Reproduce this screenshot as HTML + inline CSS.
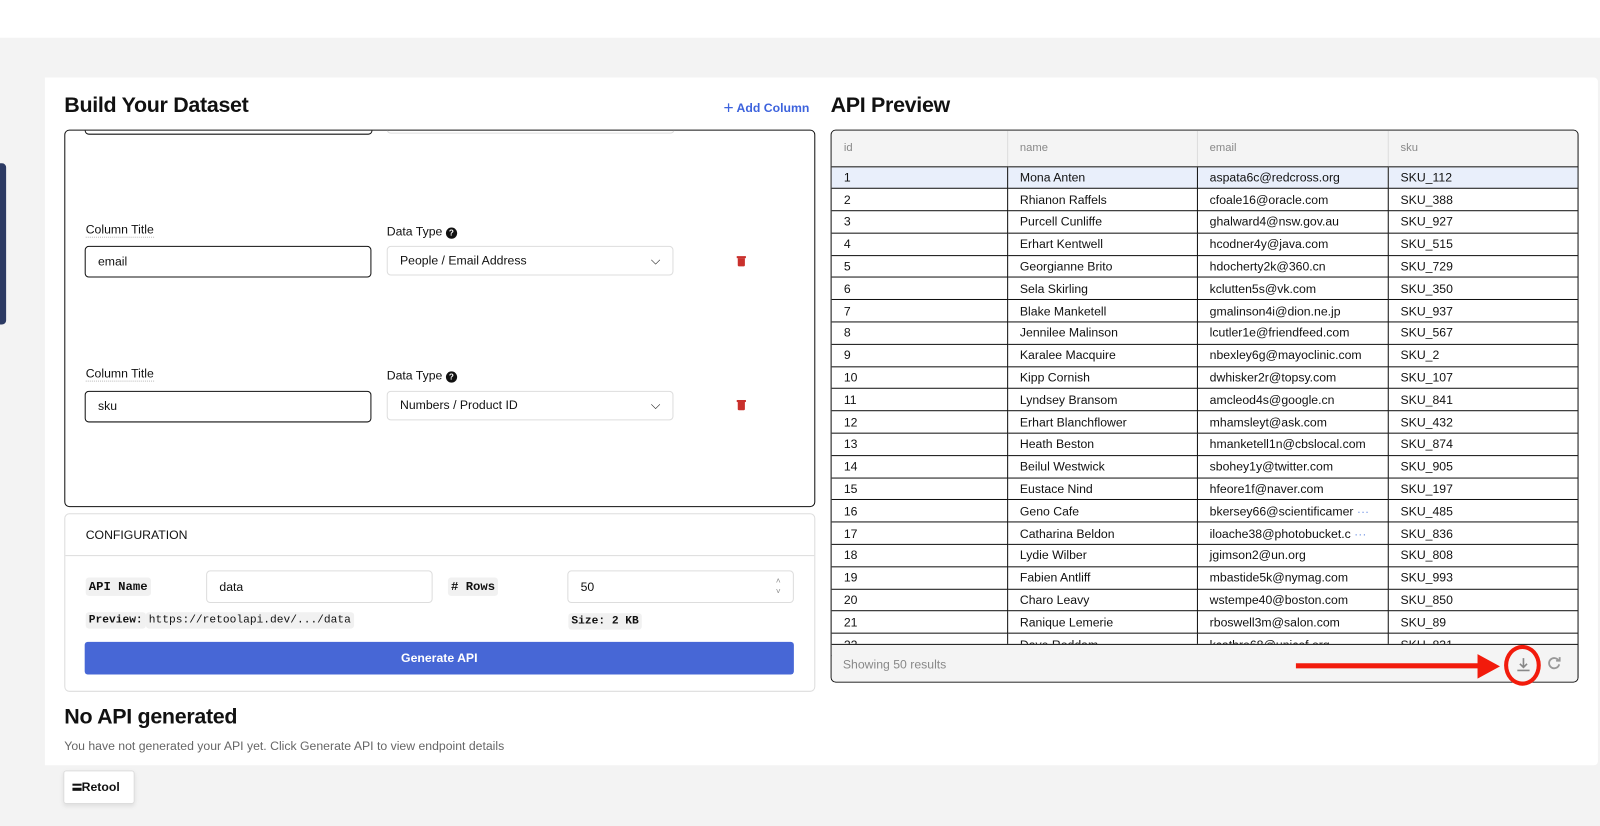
<!DOCTYPE html><html><head><style>
*{box-sizing:border-box;margin:0;padding:0}
body{width:1600px;height:825px;background:#f3f3f3;font-family:"Liberation Sans",sans-serif;position:relative;overflow:hidden;color:#111}
#w{position:absolute;left:0;top:0;width:1568px;height:809px;transform:scale(1.0204);transform-origin:0 0}
.abs{position:absolute}
.top{left:0;top:0;width:1568px;height:37px;background:#fff}
.panel{left:44px;top:76px;width:1522px;height:674px;background:#fff;border-radius:0 4px 4px 0}
h1{font-size:21px;font-weight:bold;letter-spacing:-0.3px}
.lbl{font-size:12px;color:#111}
.inp{border:1px solid #111;border-radius:4px;height:31px;font-size:12px;padding:0 12px;line-height:29px;background:#fff}
.sel{border:1px solid #ddd;border-radius:4px;height:29px;font-size:12px;padding:0 12px;line-height:27px}
.trash{width:7px;height:8px;background:#c9302c;border-radius:0 0 1px 1px}
.trash:before{content:"";position:absolute;left:-1px;top:-2px;width:9px;height:1.5px;background:#c9302c}
table{border-collapse:collapse;font-size:12px;width:733px;table-layout:fixed}
td{border:1px solid #111;height:21.8px;padding:0 12px;white-space:nowrap;overflow:hidden}
th{height:35px;text-align:left;font-weight:normal;color:#888;font-size:11px;padding:0 12px;border-right:1px solid #ddd;border-bottom:1px solid #111;background:#f4f4f4}
.mono{font-family:"Liberation Mono",monospace;font-size:11px;background:#f1f1f1;border-radius:3px;padding:2px 3px}
</style></head><body><div id="w">
<div class="abs top"></div>
<div class="abs" style="left:0;top:160px;width:6px;height:158px;background:#2c3a63;border-radius:0 4px 4px 0"></div>
<div class="abs panel"></div>
<h1 class="abs" style="left:63px;top:92px">Build Your Dataset</h1>
<div class="abs" style="left:709px;top:95px;color:#3d63dd;font-size:12px;font-weight:bold"><span style="font-size:17px;font-weight:normal;position:relative;top:1px">+</span> Add Column</div>
<div class="abs" style="left:63px;top:127px;width:736px;height:370px;border:1px solid #111;border-radius:5px;overflow:hidden;background:#fff">
 <div class="abs" style="left:19px;top:-10px;width:282px;height:14px;border:1px solid #111;border-radius:4px"></div>
 <div class="abs" style="left:315px;top:-10px;width:282px;height:13px;border:1px solid #ddd;border-radius:4px"></div>
</div>
<div class="abs lbl" style="left:84px;top:218px;border-bottom:1px dotted #bbb">Column Title</div>
<div class="abs lbl" style="left:379px;top:220px">Data Type <span style="display:inline-block;width:11px;height:11px;border-radius:50%;background:#111;color:#fff;font-size:8px;text-align:center;line-height:11px;font-weight:bold">?</span></div>
<div class="abs inp" style="left:83px;top:241px;width:281px">email</div>
<div class="abs sel" style="left:379px;top:241px;width:281px">People / Email Address<span style="float:right">⌵</span></div>
<div class="abs trash" style="left:723px;top:253px"></div>
<div class="abs lbl" style="left:84px;top:359px;border-bottom:1px dotted #bbb">Column Title</div>
<div class="abs lbl" style="left:379px;top:361px">Data Type <span style="display:inline-block;width:11px;height:11px;border-radius:50%;background:#111;color:#fff;font-size:8px;text-align:center;line-height:11px;font-weight:bold">?</span></div>
<div class="abs inp" style="left:83px;top:383px;width:281px">sku</div>
<div class="abs sel" style="left:379px;top:383px;width:281px">Numbers / Product ID<span style="float:right">⌵</span></div>
<div class="abs trash" style="left:723px;top:394px"></div>
<div class="abs" style="left:63px;top:503px;width:736px;height:175px;border:1px solid #ddd;border-radius:5px">
 <div style="height:41px;border-bottom:1px solid #ddd;font-size:12px;padding:13px 0 0 20px">CONFIGURATION</div>
</div>
<div class="abs" style="left:84px;top:566px;font-family:'Liberation Mono',monospace;font-weight:bold;font-size:12px;background:#f1f1f1;padding:2px 3px;border-radius:3px">API Name</div>
<div class="abs sel" style="left:202px;top:559px;width:222px;height:32px;line-height:30px">data</div>
<div class="abs" style="left:439px;top:566px;font-family:'Liberation Mono',monospace;font-weight:bold;font-size:12px;background:#f1f1f1;padding:2px 3px;border-radius:3px"># Rows</div>
<div class="abs sel" style="left:556px;top:559px;width:222px;height:32px;line-height:30px">50<span style="float:right;font-size:8px;line-height:10px;color:#888;margin-top:5px">˄<br>˅</span></div>
<div class="abs" style="left:84px;top:601px;font-size:11px"><span class="mono" style="font-weight:bold">Preview:</span><span class="mono">https://retoolapi.dev/.../data</span></div>
<div class="abs mono" style="left:557px;top:601px;font-weight:bold">Size: 2 KB</div>
<div class="abs" style="left:83px;top:629px;width:695px;height:32px;background:#4767d6;border-radius:3px;color:#fff;font-size:12px;font-weight:bold;text-align:center;line-height:32px">Generate API</div>
<h1 class="abs" style="left:63px;top:691px">No API generated</h1>
<div class="abs" style="left:63px;top:724px;font-size:12px;color:#666">You have not generated your API yet. Click Generate API to view endpoint details</div>
<div class="abs" style="left:62px;top:755px;width:70px;height:33px;background:#fff;border:1px solid #ddd;border-radius:3px;box-shadow:0 2px 4px rgba(0,0,0,.08);font-size:12px;font-weight:bold;line-height:31px;padding-left:8px"><span style="display:inline-block;width:9px;height:7px;border-top:2px solid #111;border-bottom:3px solid #111;vertical-align:middle"></span>Retool</div>
<h1 class="abs" style="left:814px;top:92px">API Preview</h1>
<div class="abs" style="left:814px;top:127px;width:733px;height:542px;border:1px solid #111;border-radius:5px;overflow:hidden;background:#fff">
<table><colgroup><col style="width:172px"><col style="width:186px"><col style="width:187px"><col></colgroup>
<tr><th>id</th><th>name</th><th>email</th><th style="border-right:none">sku</th></tr>
<tr style="background:#e9effb"><td style="border-left:none">1</td><td>Mona Anten</td><td>aspata6c@redcross.org</td><td>SKU_112</td></tr>
<tr><td style="border-left:none">2</td><td>Rhianon Raffels</td><td>cfoale16@oracle.com</td><td>SKU_388</td></tr>
<tr><td style="border-left:none">3</td><td>Purcell Cunliffe</td><td>ghalward4@nsw.gov.au</td><td>SKU_927</td></tr>
<tr><td style="border-left:none">4</td><td>Erhart Kentwell</td><td>hcodner4y@java.com</td><td>SKU_515</td></tr>
<tr><td style="border-left:none">5</td><td>Georgianne Brito</td><td>hdocherty2k@360.cn</td><td>SKU_729</td></tr>
<tr><td style="border-left:none">6</td><td>Sela Skirling</td><td>kclutten5s@vk.com</td><td>SKU_350</td></tr>
<tr><td style="border-left:none">7</td><td>Blake Manketell</td><td>gmalinson4i@dion.ne.jp</td><td>SKU_937</td></tr>
<tr><td style="border-left:none">8</td><td>Jennilee Malinson</td><td>lcutler1e@friendfeed.com</td><td>SKU_567</td></tr>
<tr><td style="border-left:none">9</td><td>Karalee Macquire</td><td>nbexley6g@mayoclinic.com</td><td>SKU_2</td></tr>
<tr><td style="border-left:none">10</td><td>Kipp Cornish</td><td>dwhisker2r@topsy.com</td><td>SKU_107</td></tr>
<tr><td style="border-left:none">11</td><td>Lyndsey Bransom</td><td>amcleod4s@google.cn</td><td>SKU_841</td></tr>
<tr><td style="border-left:none">12</td><td>Erhart Blanchflower</td><td>mhamsleyt@ask.com</td><td>SKU_432</td></tr>
<tr><td style="border-left:none">13</td><td>Heath Beston</td><td>hmanketell1n@cbslocal.com</td><td>SKU_874</td></tr>
<tr><td style="border-left:none">14</td><td>Beilul Westwick</td><td>sbohey1y@twitter.com</td><td>SKU_905</td></tr>
<tr><td style="border-left:none">15</td><td>Eustace Nind</td><td>hfeore1f@naver.com</td><td>SKU_197</td></tr>
<tr><td style="border-left:none">16</td><td>Geno Cafe</td><td>bkersey66@scientificamer <span style="color:#7b9be6">···</span></td><td>SKU_485</td></tr>
<tr><td style="border-left:none">17</td><td>Catharina Beldon</td><td>iloache38@photobucket.c <span style="color:#7b9be6">···</span></td><td>SKU_836</td></tr>
<tr><td style="border-left:none">18</td><td>Lydie Wilber</td><td>jgimson2@un.org</td><td>SKU_808</td></tr>
<tr><td style="border-left:none">19</td><td>Fabien Antliff</td><td>mbastide5k@nymag.com</td><td>SKU_993</td></tr>
<tr><td style="border-left:none">20</td><td>Charo Leavy</td><td>wstempe40@boston.com</td><td>SKU_850</td></tr>
<tr><td style="border-left:none">21</td><td>Ranique Lemerie</td><td>rboswell3m@salon.com</td><td>SKU_89</td></tr>
<tr><td style="border-left:none">22</td><td>Dave Roddam</td><td>kcathro68@unicef.org</td><td>SKU_831</td></tr>
</table>
<div class="abs" style="left:0;top:503px;width:100%;height:38px;background:#f4f4f4;border-top:1px solid #111;font-size:12px;color:#888;padding:12px 0 0 11px">Showing 50 results</div>
</div>
<div class="abs" style="left:1270px;top:650px;width:180px;height:5px;background:#f21b0c"></div>
<div class="abs" style="left:1448px;top:641px;width:0;height:0;border-left:22px solid #f21b0c;border-top:12px solid transparent;border-bottom:12px solid transparent"></div>
<div class="abs" style="left:1474px;top:632px;width:36px;height:40px;border:4px solid #f21b0c;border-radius:50%"></div>
<svg class="abs" style="left:1486px;top:643px" width="14" height="16" viewBox="0 0 14 16"><path d="M7 2v9M3.5 7.5L7 11l3.5-3.5M1 14h12" stroke="#888" stroke-width="1.6" fill="none"/></svg>
<svg class="abs" style="left:1516px;top:643px" width="14" height="14" viewBox="0 0 14 14"><path d="M11.5 4.5A5 5 0 1 0 12 8" stroke="#999" stroke-width="1.8" fill="none"/><path d="M9 4.5h3.5V1" stroke="#999" stroke-width="1.8" fill="none"/></svg>
</div></body></html>
